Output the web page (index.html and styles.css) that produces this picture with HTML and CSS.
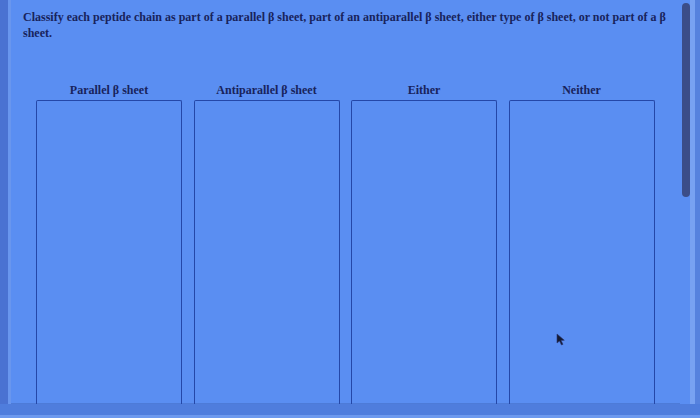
FILE: index.html
```html
<!DOCTYPE html>
<html lang="en">
<head>
    <meta charset="UTF-8">
    <title>Classify peptide chains</title>
    <link rel="stylesheet" href="styles.css">
</head>
<body>
    <div class="screen">
        <div class="bezel"></div>
        <main class="panel">
            <p class="prompt">Classify each peptide chain as part of a parallel β sheet, part of an antiparallel β sheet, either type of β sheet, or not part of a β sheet.</p>

            <div class="bins">
                <div class="bin">
                    <div class="bin-title">Parallel β sheet</div>
                    <div class="drop-zone"></div>
                </div>
                <div class="bin">
                    <div class="bin-title">Antiparallel β sheet</div>
                    <div class="drop-zone"></div>
                </div>
                <div class="bin">
                    <div class="bin-title">Either</div>
                    <div class="drop-zone"></div>
                </div>
                <div class="bin">
                    <div class="bin-title">Neither</div>
                    <div class="drop-zone"></div>
                </div>
            </div>
        </main>
        <div class="track">
            <div class="thumb"></div>
        </div>
    </div>
    <div class="bottom-band"></div>

    <!-- mouse pointer resting over the last bin -->
    <svg class="pointer" width="10" height="13" viewBox="0 0 10 13">
        <path d="M1 1 L1 10 L3.5 8 L5.5 12 L7 11.3 L5 7.4 L8.3 7.2 Z" fill="#141a33" stroke="#2a3670" stroke-width="0.6"/>
    </svg>
</body>
</html>
```

FILE: styles.css
```css
body {
    margin: 0;
    height: 418px;
    overflow: hidden;
    background: #5281e2;
    font-family: 'Liberation Serif', 'Times New Roman', serif;
    color: #18235c;
    display: flex;
    flex-direction: column;
}

.screen {
    display: flex;
    height: 404px;
}

.bezel {
    width: 8px;
    background: #4a72d2;
    border-right: 3px solid #6996ee;
}

.panel {
    flex: 1;
    background: #5a8ef2;
    border-bottom: 1px solid #4d7bd8;
}

.prompt {
    margin: 0;
    padding: 9px 8px 0 12px;
    font-size: 12px;
    font-weight: bold;
    line-height: 16px;
}

.bins {
    display: grid;
    grid-template-columns: repeat(4, 146px);
    column-gap: 11.5px;
    padding-left: 25px;
    margin-top: 42px;
}

.bin-title {
    text-align: center;
    font-size: 12px;
    font-weight: bold;
    line-height: 14px;
    margin-bottom: 3px;
}

.drop-zone {
    height: 304px;
    border: 1px solid #2447a8;
    border-bottom-color: #3a62c4;
    border-radius: 2px;
}

.track {
    width: 20px;
    padding: 3px 0 0 2px;
    box-sizing: border-box;
    background: linear-gradient(to right, #5a8ef2 0, #5a8ef2 10px, #78a2f2 10px, #78a2f2 15px, #5682de 15px);
}

.thumb {
    width: 8px;
    height: 194px;
    border-radius: 4px;
    background: #3b4d88;
}

.bottom-band {
    flex: 1;
    background: linear-gradient(to bottom, #4f7ddd 0, #4f7ddd 11px, #6d99ee 11px);
}

.pointer {
    position: absolute;
    left: 556px;
    top: 333px;
}
```
